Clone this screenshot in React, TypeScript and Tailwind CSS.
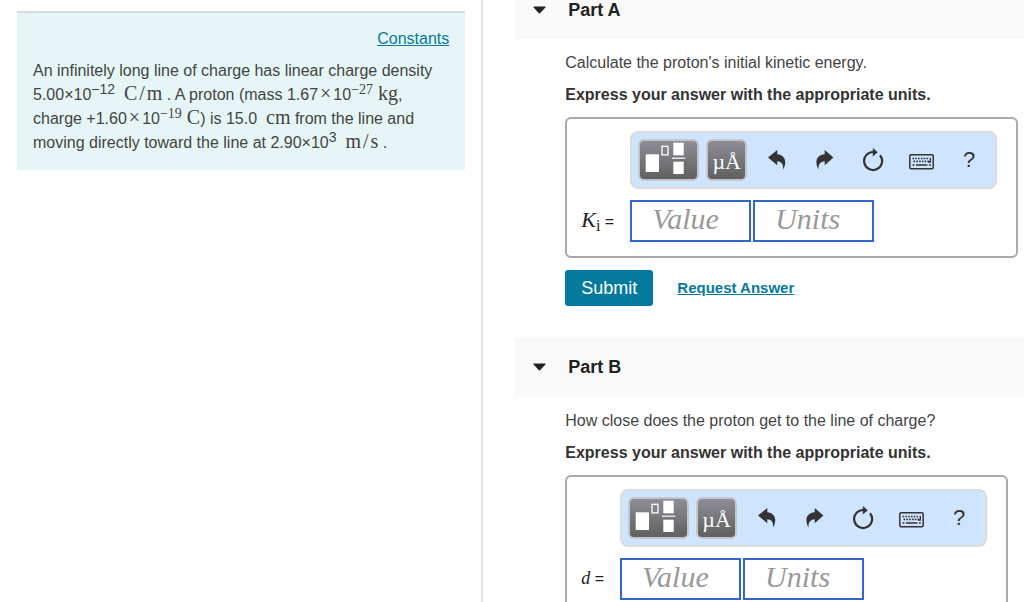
import type { ReactNode } from "react";

const Undo = () => (
  <svg width="18" height="20" viewBox="0 0 18 20" fill="#333">
    <path d="M0 7.400 9.300 0v4.200C14.200 4.600 17.200 7.600 17.200 12c0 2.800-.7 5.200-2.200 7.600.6-5.200-1.400-8-5.700-8.300v3.900Z" />
  </svg>
);

const Redo = () => (
  <svg width="18" height="20" viewBox="0 0 18 20" fill="#333">
    <path d="M17.400 7.400 8.700 0v4.200C3.400 4.600.4 7.600.4 12c0 2.800.7 5.200 2.200 7.600-.6-5.200 1.800-8 6.100-8.300v3.900Z" />
  </svg>
);

const Reset = () => (
  <svg width="22" height="24" viewBox="0 0 22 24">
    <path d="M18 7.200A9 9 0 1 1 11.500 4" fill="none" stroke="#333" strokeWidth="2.200" />
    <path d="M10.800 0 15.800 4.200 10.800 8.500Z" fill="#333" />
  </svg>
);

const Keyboard = () => (
  <svg width="25" height="20" viewBox="0 -4 25 20" fill="none" stroke="#333">
    <rect x="0.800" y="0.800" width="23.400" height="14" rx="1.200" strokeWidth="1.500" />
    <path d="M3.500 4.500H20M4.500 7.300H20" strokeWidth="1.700" strokeDasharray="1.600 1.200" />
    <path d="M21.300 3.700V8H19" strokeWidth="1.300" />
    <path d="M3.500 11H5.500M7 11H18.500M20 11H21.800" strokeWidth="1.600" />
  </svg>
);

const Template = () => (
  <svg width="57" height="38" viewBox="2 2 57 38" fill="#fff">
    <rect x="7.700" y="15.300" width="13.300" height="17.700" />
    <rect x="24" y="7.300" width="6" height="8.600" fill="none" stroke="#fff" strokeWidth="1.300" />
    <rect x="35.300" y="3.700" width="10.400" height="12.600" />
    <rect x="34" y="18.600" width="13.200" height="1.200" />
    <rect x="35.300" y="22.700" width="10.400" height="12.300" />
  </svg>
);

const tools = [
  { label: "Undo", icon: <Undo /> },
  { label: "Redo", icon: <Redo /> },
  { label: "Reset", icon: <Reset /> },
  { label: "Keyboard shortcuts", icon: <Keyboard /> },
];

const Toolbar = () => (
  <div className="flex items-center rounded-lg border-2 border-[#dcdcdc] bg-[#cfe5ff] py-[6px] pr-[2px] pl-[6px]">
    <button
      aria-label="Templates"
      className="h-[42px] w-[61px] rounded-md border-2 border-[#c4c6ca] bg-linear-to-b from-[#8f8e97] to-[#606060]"
    >
      <Template />
    </button>
    <button
      aria-label="Symbols"
      className="mr-[6px] ml-[7px] h-[42px] w-[41px] rounded-md border-2 border-[#c4c6ca] bg-linear-to-b from-[#8f8e97] to-[#606060] pt-1 font-['Liberation_Serif',serif] text-[22px] leading-none text-white"
    >
      µÅ
    </button>
    {tools.map((tool) => (
      <button key={tool.label} aria-label={tool.label} className="flex w-12 justify-center">
        {tool.icon}
      </button>
    ))}
    <button aria-label="Help" className="w-12 text-[22px] leading-none text-[#333]">
      ?
    </button>
  </div>
);

const Field = ({ id, label }: { id: string; label: string }) => (
  <input
    id={id}
    aria-label={label}
    placeholder={label}
    className="h-[42px] w-[121px] border-2 border-[#3366cc] bg-white pb-1 pl-5 font-['Liberation_Serif',serif] text-3xl italic placeholder:text-[#999]"
  />
);

const Math = ({ children }: { children: ReactNode }) => (
  <span className="font-['Liberation_Serif',serif] text-[20px] leading-none">{children}</span>
);

const Slash = () => <span className="mx-[2px]">/</span>;

const Times = () => (
  <span className="mx-[2px] font-['Liberation_Serif',serif] text-[20px] leading-none">×</span>
);

const Sup = ({ children }: { children: ReactNode }) => (
  <sup className="-top-[6px] text-[14px]">{children}</sup>
);

type PartProps = {
  id: string;
  title: string;
  question: string;
  symbol: ReactNode;
  first?: boolean;
};

const Part = ({ id, title, question, symbol, first }: PartProps) => (
  <section className="mb-8">
    <h2
      className={
        first
          ? "bg-[#f9f9f9] pb-[19px] text-[18px] leading-5 font-bold text-[#222]"
          : "bg-[#f9f9f9] pt-[19px] pb-5 text-[18px] leading-5 font-bold text-[#222]"
      }
    >
      <button className="flex items-center pl-[18px]">
        <svg width="13" height="8" viewBox="0 0 13 8" className="mr-[22px]" fill="#222">
          <path d="M1 0.500h11q1 0 .4.900L7.300 7q-.8.800-1.600 0L.6 1.400Q0 .500 1 .500Z" />
        </svg>
        {title}
      </button>
    </h2>
    <div className="pl-[50px]">
      <p className="mt-3 leading-6">{question}</p>
      <p className="mt-2 leading-6 font-bold text-[#333]">
        Express your answer with the appropriate units.
      </p>
      <div className="mt-[10px] grid w-fit grid-cols-[auto_auto] items-center gap-y-[11px] rounded-md border-2 border-[#aaa] pt-3 pr-[19px] pb-[14px] pl-[14px]">
        <div className="col-start-2">
          <Toolbar />
        </div>
        <label htmlFor={`${id}-value`} className="pr-4 text-[#222]">
          {symbol} =
        </label>
        <div className="flex gap-[2px]">
          <Field id={`${id}-value`} label="Value" />
          <Field id={`${id}-units`} label="Units" />
        </div>
      </div>
      <div className="mt-3 flex items-center gap-6">
        <button className="h-9 rounded-[3px] bg-[#047a9c] px-4 text-[18px] text-white">
          Submit
        </button>
        <a href="#" className="text-[15px] font-bold text-[#047a9c] underline">
          Request Answer
        </a>
      </div>
    </div>
  </section>
);

export default function App() {
  return (
    <main className="flex h-screen overflow-hidden bg-white font-['Liberation_Sans',Arial,sans-serif] text-[16px] text-[#444]">
      <aside className="w-[47%] shrink-0 pt-[11px] pr-4 pl-[17px]">
        <div className="border-t-2 border-[#d8dcdc] bg-[#e6f6f6] px-4 pt-[14px] pb-[15px]">
          <div className="text-right leading-6">
            <a href="#" className="text-[#047a9c] underline">
              Constants
            </a>
          </div>
          <p className="mt-2 leading-6">
            An infinitely long line of charge has linear charge density
            <br />
            5.00×10<Sup>−12</Sup>&nbsp;{" "}
            <Math>
              C<Slash />m
            </Math>{" "}
            . A proton (mass 1.67
            <Times />
            10
            <Math>
              <Sup>−27</Sup> kg
            </Math>
            ,
            <br />
            charge +1.60
            <Times />
            10
            <Math>
              <Sup>−19</Sup> C
            </Math>
            ) is 15.0&nbsp; <Math>cm</Math> from the line and
            <br />
            moving directly toward the line at 2.90×10<Sup>3</Sup>&nbsp;{" "}
            <Math>
              m<Slash />s
            </Math>{" "}
            .
          </p>
        </div>
      </aside>
      <div className="min-w-0 flex-1 border-l-2 border-[#dfe3ea] pl-8">
        <Part
          first
          id="part-a"
          title="Part A"
          question="Calculate the proton's initial kinetic energy."
          symbol={
            <span className="font-['Liberation_Serif',serif] text-[22px] leading-none">
              <i>K</i>
              <sub className="text-[16px]">i</sub>
            </span>
          }
        />
        <Part
          id="part-b"
          title="Part B"
          question="How close does the proton get to the line of charge?"
          symbol={
            <i className="font-['Liberation_Serif',serif] text-[18px] leading-none">d</i>
          }
        />
      </div>
    </main>
  );
}
